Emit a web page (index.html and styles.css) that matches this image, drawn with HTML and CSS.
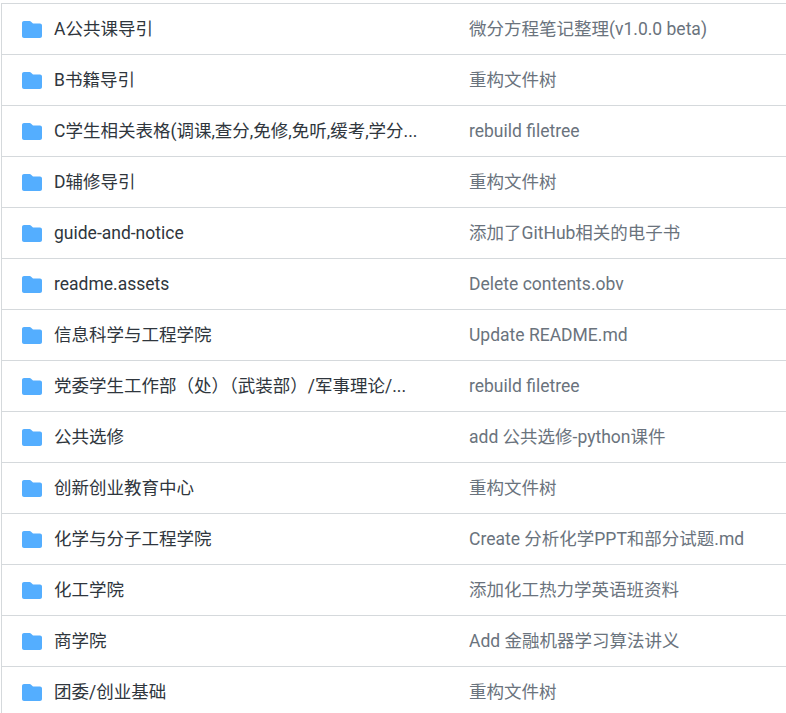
FILE: index.html
```html
<!DOCTYPE html>
<html lang="zh-CN">

<head>
    <meta charset="UTF-8">
    <title>文件列表</title>
    <link rel="stylesheet" href="styles.css">
</head>

<body>
    <svg class="defs" width="0" height="0">
        <symbol id="folder" viewBox="0 0 20 17">
            <path d="M2 0h5.6c.6 0 1.1.2 1.5.7L11 2.6h7c1.1 0 2 .9 2 2V15c0 1.100-.9 2-2 2H2c-1.100 0-2-.9-2-2V2C0 .9.9 0 2 0z" />
        </symbol>
    </svg>
    <div class="filelist">
        <div class="row">
            <div class="name"><svg class="icon"><use href="#folder" /></svg><span>A公共课导引</span></div>
            <div class="msg">微分方程笔记整理(v1.0.0 beta)</div>
        </div>
        <div class="row">
            <div class="name"><svg class="icon"><use href="#folder" /></svg><span>B书籍导引</span></div>
            <div class="msg">重构文件树</div>
        </div>
        <div class="row">
            <div class="name"><svg class="icon"><use href="#folder" /></svg><span>C学生相关表格(调课,查分,免修,免听,缓考,学分...</span></div>
            <div class="msg">rebuild filetree</div>
        </div>
        <div class="row">
            <div class="name"><svg class="icon"><use href="#folder" /></svg><span>D辅修导引</span></div>
            <div class="msg">重构文件树</div>
        </div>
        <div class="row">
            <div class="name"><svg class="icon"><use href="#folder" /></svg><span>guide-and-notice</span></div>
            <div class="msg">添加了GitHub相关的电子书</div>
        </div>
        <div class="row">
            <div class="name"><svg class="icon"><use href="#folder" /></svg><span>readme.assets</span></div>
            <div class="msg">Delete contents.obv</div>
        </div>
        <div class="row">
            <div class="name"><svg class="icon"><use href="#folder" /></svg><span>信息科学与工程学院</span></div>
            <div class="msg">Update README.md</div>
        </div>
        <div class="row">
            <div class="name"><svg class="icon"><use href="#folder" /></svg><span>党委学生工作部（处）（武装部）/军事理论/...</span></div>
            <div class="msg">rebuild filetree</div>
        </div>
        <div class="row">
            <div class="name"><svg class="icon"><use href="#folder" /></svg><span>公共选修</span></div>
            <div class="msg">add 公共选修-python课件</div>
        </div>
        <div class="row">
            <div class="name"><svg class="icon"><use href="#folder" /></svg><span>创新创业教育中心</span></div>
            <div class="msg">重构文件树</div>
        </div>
        <div class="row">
            <div class="name"><svg class="icon"><use href="#folder" /></svg><span>化学与分子工程学院</span></div>
            <div class="msg">Create 分析化学PPT和部分试题.md</div>
        </div>
        <div class="row">
            <div class="name"><svg class="icon"><use href="#folder" /></svg><span>化工学院</span></div>
            <div class="msg">添加化工热力学英语班资料</div>
        </div>
        <div class="row">
            <div class="name"><svg class="icon"><use href="#folder" /></svg><span>商学院</span></div>
            <div class="msg">Add 金融机器学习算法讲义</div>
        </div>
        <div class="row">
            <div class="name"><svg class="icon"><use href="#folder" /></svg><span>团委/创业基础</span></div>
            <div class="msg">重构文件树</div>
        </div>
    </div>
</body>

</html>
```

FILE: styles.css
```css
/* General styles */
html,
body {
    height: 100%;
    overflow: hidden;
}

body {
    margin: 0;
    padding: 3px 0 0 1px;
    box-sizing: border-box;
    background-color: #fff;
    font-family: Roboto, "Noto Sans CJK SC", sans-serif;
    font-size: 17.5px;
    line-height: 24px;
}

.defs {
    display: block;
}

.filelist {
    border-left: 1px solid #d5d9dc;
    border-top: 1px solid #d5d9dc;
}

.row {
    display: grid;
    grid-template-columns: 467px 1fr;
    align-items: center;
    height: 50px;
    border-bottom: 1px solid #d5d9dc;
}

.name {
    display: flex;
    align-items: center;
    gap: 12px;
    padding-left: 20px;
    color: #2f363d;
    white-space: nowrap;
}

.icon {
    flex: none;
    width: 20px;
    height: 17px;
    fill: #54aeff;
}

.msg {
    color: #6a737d;
    white-space: nowrap;
}
```
